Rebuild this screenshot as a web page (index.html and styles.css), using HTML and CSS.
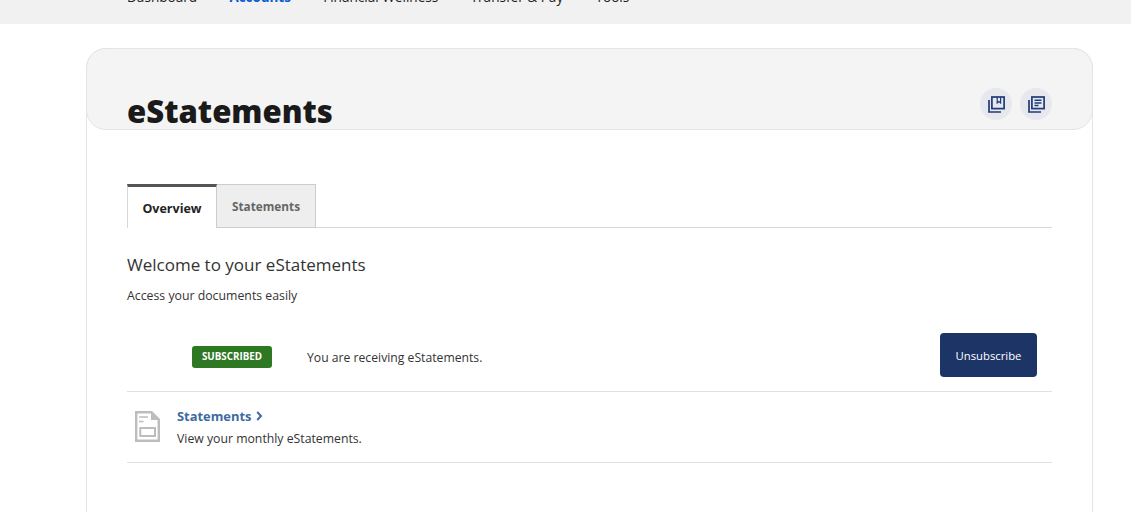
FILE: index.html
```html
<!DOCTYPE html>
<html lang="en">
<head>
<meta charset="utf-8">
<title>eStatements</title>
<link rel="stylesheet" href="styles.css">
</head>
<body>
<nav class="nav">
  <a class="nav-item">Dashboard</a>
  <a class="nav-item active">Accounts</a>
  <a class="nav-item">Financial Wellness</a>
  <a class="nav-item">Transfer &amp; Pay</a>
  <a class="nav-item">Tools</a>
</nav>
<main class="card">
  <header class="card-head">
    <h1 class="title">eStatements</h1>
    <div class="head-actions">
      <button class="round-btn" aria-label="Bookmarks">
        <svg width="17" height="17" viewBox="0 0 17 17" fill="none" stroke="#1f3a7a" stroke-width="1.7">
          <path d="M1 4v12h12"/>
          <rect x="3.900" y="1" width="12.200" height="11.600"/>
          <path d="M9.200 1v6l1.700-1.400L12.600 7V1" stroke-width="1.200"/>
        </svg>
      </button>
      <button class="round-btn" aria-label="Documents">
        <svg width="17" height="17" viewBox="0 0 17 17" fill="none" stroke="#1f3a7a" stroke-width="1.7">
          <path d="M1 4v12h12"/>
          <rect x="3.900" y="1" width="12.200" height="11.600"/>
          <path d="M6.500 4.200h7M6.500 6.900h7M6.500 9.600h4" stroke-width="1.500"/>
        </svg>
      </button>
    </div>
  </header>
  <div class="card-body">
    <div class="tabs">
      <a class="tab tab-active">Overview</a>
      <a class="tab">Statements</a>
    </div>
    <h2 class="welcome">Welcome to your eStatements</h2>
    <p class="access">Access your documents easily</p>
    <div class="status-row">
      <span class="badge">SUBSCRIBED</span>
      <span class="status-text">You are receiving eStatements.</span>
      <button class="primary">Unsubscribe</button>
    </div>
    <div class="doc-row">
      <svg class="doc-icon" width="26" height="32" viewBox="0 0 26 32" fill="none">
        <path d="M1.200 1.200h15.300L23.800 8.500v21.300H1.200z" fill="#fff" stroke="#bdbdbd" stroke-width="2.400"/>
        <path d="M16 1v8h9z" fill="#bdbdbd"/>
        <path d="M4 6h9M4 10.500h4.500" stroke="#bdbdbd" stroke-width="1.600"/>
        <rect x="5.300" y="17" width="14.700" height="8" stroke="#bdbdbd" stroke-width="2"/>
      </svg>
      <div class="doc-text">
        <a class="doc-link">Statements <svg class="chev" width="7" height="10" viewBox="0 0 7 10" fill="none"><path d="M1.200 1l3.800 4-3.800 4" stroke="#3e6aa3" stroke-width="2"/></svg></a>
        <p class="doc-desc">View your monthly eStatements.</p>
      </div>
    </div>
  </div>
</main>
</body>
</html>
```
FILE: styles.css
```css
* { box-sizing: border-box; }
html, body { margin: 0; padding: 0; height: 512px; overflow: hidden; background: #fff; }
body { font-family: "Open Sans", "Noto Sans", sans-serif; color: #2b2b2b; }

.nav {
  height: 24px;
  background: #f1f1f1;
  display: flex;
  align-items: flex-end;
  gap: 32.300px;
  padding: 0 0 18px 127px;
  overflow: hidden;
  font-size: 13.600px;
  line-height: 18px;
}
.nav-item { color: #222; white-space: nowrap; flex: none; }
.nav-item.active { color: #0b5bd3; font-weight: 700; font-size: 13.400px; }

.card {
  margin: 24px 38px 0 86px;
  height: 520px;
  border: 1px solid #e4e4e4;
  border-radius: 20px 20px 0 0;
}
.card-head {
  margin: -1px -1px 0;
  height: 82px;
  background: #f4f4f4;
  border: 1px solid #e4e4e4;
  border-radius: 20px;
  padding: 0 40px 0 40px;
  display: flex;
  justify-content: space-between;
  align-items: flex-end;
}
.title {
  margin: 0 0 -1px;
  font-size: 31.100px;
  line-height: 38px;
  font-weight: 800;
  color: #1a1a1a;
  letter-spacing: 0;
}
.head-actions { display: flex; gap: 8px; padding-bottom: 9px; }
.round-btn {
  width: 32px;
  height: 32px;
  border-radius: 50%;
  border: 0;
  padding: 0;
  background: #e7e8ee;
  display: flex;
  align-items: center;
  justify-content: center;
}

.card-body { padding: 54px 40px 0; }
.tabs {
  display: flex;
  height: 44px;
  border-bottom: 1px solid #d8d8d8;
}
.tab {
  width: 99px;
  height: 44px;
  background: #eee;
  border: 1px solid #ccc;
  border-left: 0;
  font-size: 11.800px;
  font-weight: 700;
  color: #666;
  text-align: center;
  line-height: 42px;
}
.tab-active {
  width: 90px;
  background: #fff;
  border: 0;
  border-right: 1px solid #ccc;
  border-left: 1px solid #d8d8d8;
  border-top: 3px solid #555;
  color: #222;
  line-height: 44px;
  height: 44px;
  font-size: 12.500px;
}
.welcome {
  margin: 25px 0 0;
  font-size: 17px;
  line-height: 24px;
  font-weight: 400;
  color: #333;
}
.access {
  margin: 10px 0 0;
  font-size: 12.300px;
  line-height: 18px;
  color: #333;
}
.status-row {
  display: flex;
  align-items: center;
  margin-top: 21px;
  padding: 10px 15px 13px 65px;
  border-bottom: 1px solid #e0e0e0;
  height: 66px;
}
.badge {
  width: 80px;
  height: 22px;
  background: #2f7823;
  color: #fff;
  border-radius: 3px;
  font-size: 9.800px;
  font-weight: 700;
  line-height: 22px;
  text-align: center;
}
.status-text { margin-left: 35px; font-size: 12.200px; color: #333; flex: 1; }
.primary {
  width: 97px;
  height: 44px;
  margin-top: -4px;
  background: #1d3566;
  color: #fff;
  border: 0;
  border-radius: 4px;
  font-family: inherit;
  font-size: 11.300px;
  font-weight: 500;
}
.doc-row {
  display: flex;
  align-items: center;
  height: 71px;
  border-bottom: 1px solid #e0e0e0;
  padding-left: 8px;
}
.doc-icon { flex: none; margin-right: 16px; }
.doc-link {
  display: block;
  font-size: 12.900px;
  font-weight: 700;
  line-height: 18px;
  color: #3e6aa3;
}
.chev { margin-left: 1px; }
.doc-desc { margin: 5px 0 0; font-size: 12.250px; line-height: 18px; color: #333; }
```
